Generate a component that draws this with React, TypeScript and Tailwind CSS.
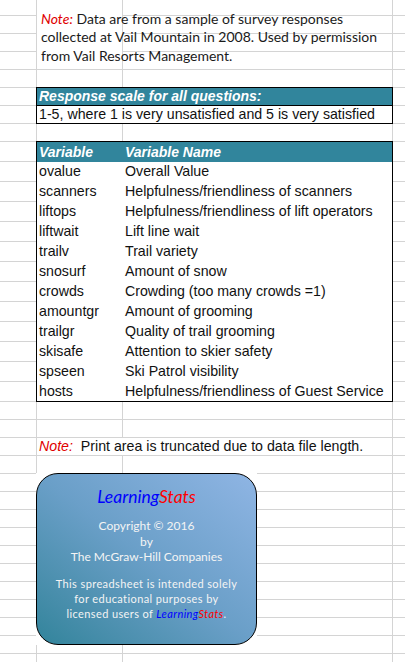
import type { ReactNode } from 'react';

const VARIABLES = [
  ['ovalue', 'Overall Value'],
  ['scanners', 'Helpfulness/friendliness of scanners'],
  ['liftops', 'Helpfulness/friendliness of lift operators'],
  ['liftwait', 'Lift line wait'],
  ['trailv', 'Trail variety'],
  ['snosurf', 'Amount of snow'],
  ['crowds', 'Crowding (too many crowds =1)'],
  ['amountgr', 'Amount of grooming'],
  ['trailgr', 'Quality of trail grooming'],
  ['skisafe', 'Attention to skier safety'],
  ['spseen', 'Ski Patrol visibility'],
  ['hosts', 'Helpfulness/friendliness of Guest Service'],
];

function Cell({ className = '', children }: { className?: string; children?: ReactNode }) {
  return <div className={`shrink-0 border-b border-r border-[#d4d4d4] ${className}`}>{children}</div>;
}

// one spreadsheet row: column A, B, C and the bit of D on the right
function GridRow({ h = 'h-[18px]', children }: { h?: string; children?: ReactNode }) {
  return (
    <div className={`flex ${h}`}>
      <Cell className="w-[37px]" />
      {children ?? (
        <>
          <Cell className="w-[86px]" />
          <Cell className="w-[270px]" />
        </>
      )}
      <div className="flex-1 border-b border-[#d4d4d4]" />
    </div>
  );
}

function SideCells({ heights }: { heights: string[] }) {
  return (
    <div className="flex flex-col">
      {heights.map((h, i) => (
        <div key={i} className={`border-b border-[#d4d4d4] ${h}`} />
      ))}
    </div>
  );
}

function LearningStats() {
  return (
    <span className="italic">
      <span className="text-[#0000ff]">Learning</span>
      <span className="text-[#ff0000]">Stats</span>
    </span>
  );
}

function NoteRow({ h }: { h?: string }) {
  return (
    <GridRow h={h}>
      <Cell className="w-[86px] border-b-0" />
      <Cell className="w-[270px]" />
    </GridRow>
  );
}

export default function App() {
  const dataHeights = VARIABLES.map(() => 'h-5');

  return (
    <div className="relative w-[405px] h-[662px] overflow-hidden bg-white font-['Liberation_Sans',Arial,sans-serif] text-[14.2px] text-[#111]">
      {/* top rows, the note text lies over rows 2-4 */}
      <NoteRow h="h-[16px]" />
      <NoteRow />
      <NoteRow />
      <GridRow />
      <GridRow />

      {/* response scale box */}
      <div className="relative -mt-px flex h-[37px]">
        <div className="w-[36px] shrink-0">
          <SideCells heights={['h-[19px]', 'h-[18px]']} />
        </div>
        <div className="w-[357px] shrink-0 border border-black bg-white flex flex-col">
          <div className="h-[18px] border-b border-black bg-[#31859c] pl-[2px] flex items-center font-bold italic text-white text-[14px]">
            Response scale for all questions:
          </div>
          <div className="h-[17px] pl-[2px] flex items-center whitespace-nowrap">
            1-5, where 1 is very unsatisfied and 5 is very satisfied
          </div>
        </div>
        <div className="flex-1">
          <SideCells heights={['h-[19px]', 'h-[18px]']} />
        </div>
      </div>

      <GridRow />

      {/* variable table */}
      <div className="relative -mt-px flex h-[261px]">
        <div className="w-[36px] shrink-0">
          <SideCells heights={['h-[21px]', ...dataHeights]} />
        </div>
        <div className="w-[357px] shrink-0 border border-black bg-white overflow-hidden">
          <div className="h-5 bg-[#31859c] flex items-center font-bold italic text-white text-[14px]">
            <div className="w-[86px] pl-[2px]">Variable</div>
            <div className="pl-[2px]">Variable Name</div>
          </div>
          {VARIABLES.map(([code, name]) => (
            <div key={code} className="h-5 flex items-center whitespace-nowrap">
              <div className="w-[86px] pl-[2px]">{code}</div>
              <div className="pl-[2px]">{name}</div>
            </div>
          ))}
        </div>
        <div className="flex-1">
          <SideCells heights={['h-[21px]', ...dataHeights]} />
        </div>
      </div>

      <GridRow />
      <GridRow />
      <GridRow>
        <Cell className="w-[86px] border-r-0 overflow-visible">
          <div className="h-full flex items-center pl-[2px] whitespace-nowrap">
            <span className="italic text-[#e00000]">Note:</span>
            <span>&nbsp; Print area is truncated due to data file length.</span>
          </div>
        </Cell>
        <Cell className="w-[270px]" />
      </GridRow>
      <GridRow />
      {Array.from({ length: 11 }).map((_, i) => (
        <GridRow key={i} />
      ))}

      {/* note text sits over the sheet */}
      <div className="absolute left-[41px] top-[10px] font-['Lato',sans-serif] text-[14px] leading-[18.3px] text-[#1a1a1a]">
        <span className="italic text-[#e00000]">Note:</span> Data are from a sample of survey responses
        <br />
        collected at Vail Mountain in 2008. Used by permission
        <br />
        from Vail Resorts Management.
      </div>

      {/* LearningStats shape */}
      <div className="absolute left-[36px] top-[473px] w-[221px] h-[172px] bg-white">
        <div className="h-full rounded-[22px] border border-black bg-linear-to-tr from-[#31849b] via-[#6a9fc8] to-[#8fb5e4] flex flex-col items-center text-center font-['Lato',sans-serif] text-[#f4f4f4]">
          <div className="mt-[13px] text-[17.5px] leading-5">
            <LearningStats />
          </div>
          <div className="mt-[11px] text-[12px] leading-[15.5px]">
            Copyright © 2016
            <br />
            by
            <br />
            The McGraw-Hill Companies
          </div>
          <div className="mt-[11px] text-[11px] leading-[15px] tracking-[0.4px]">
            This spreadsheet is intended solely
            <br />
            for educational purposes by
            <br />
            licensed users of <LearningStats />.
          </div>
        </div>
      </div>
    </div>
  );
}
